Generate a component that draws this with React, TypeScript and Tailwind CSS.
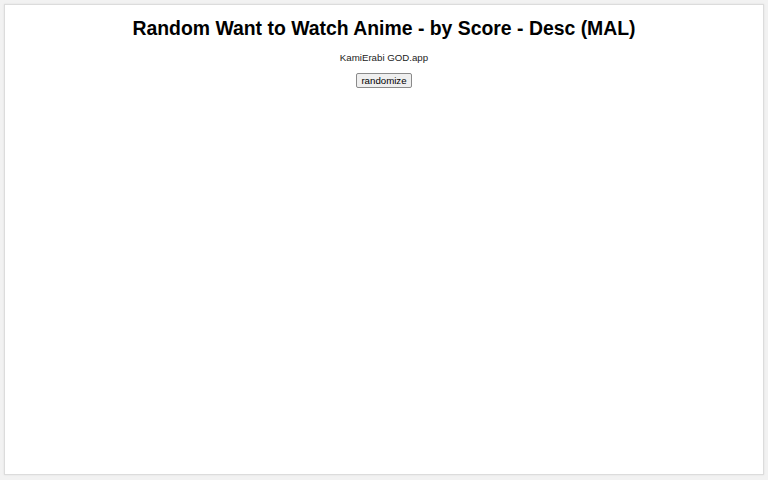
export default function App() {
  return (
    <div className="h-[480px] w-[768px] bg-[#f2f2f2] p-1 font-['Liberation_Sans',Arial,sans-serif]">
      <div className="flex h-[471px] flex-col items-center border border-[#dcdcdc] bg-white shadow-[0_0_2px_rgba(0,0,0,0.08)]">
        <h1 className="mt-[11px] text-[19.4px] font-bold leading-[24px] text-black">
          Random Want to Watch Anime - by Score - Desc (MAL)
        </h1>
        <p className="mt-[12px] text-[9.7px] leading-[12px] text-[#222]">KamiErabi GOD.app</p>
        <button
          type="button"
          className="mt-[9px] rounded-[2px] border border-[#8a8a8a] bg-[#efefef] px-[4px] text-[9.7px] leading-[13px] text-black"
        >
          randomize
        </button>
      </div>
    </div>
  );
}
